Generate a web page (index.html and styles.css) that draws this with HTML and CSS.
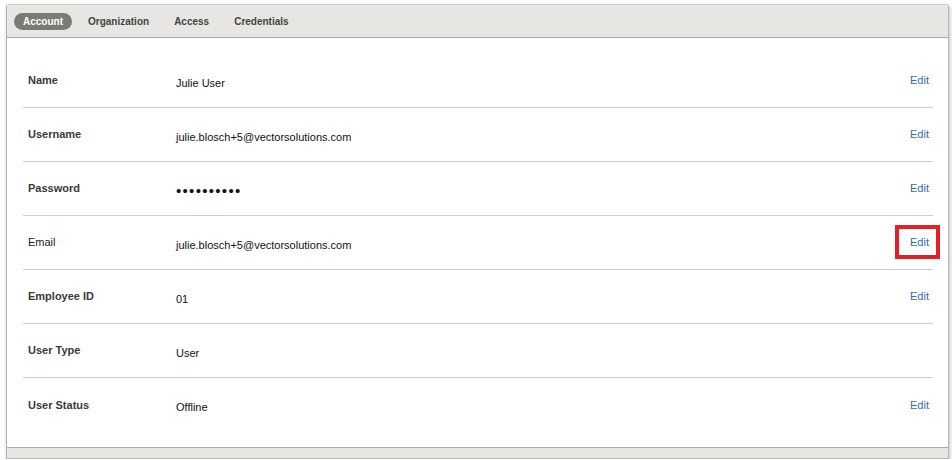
FILE: index.html
```html
<!DOCTYPE html>
<html lang="en">
<head>
    <meta charset="UTF-8">
    <title>User Profile</title>
    <link rel="stylesheet" href="styles.css">
</head>
<body>
    <div class="panel">
        <div class="tab-bar">
            <span class="tab active">Account</span>
            <span class="tab">Organization</span>
            <span class="tab">Access</span>
            <span class="tab">Credentials</span>
        </div>

        <div class="details">
            <div class="row">
                <div class="label">Name</div>
                <div class="value">Julie User</div>
                <a class="edit" href="#">Edit</a>
            </div>
            <div class="row">
                <div class="label">Username</div>
                <div class="value">julie.blosch+5@vectorsolutions.com</div>
                <a class="edit" href="#">Edit</a>
            </div>
            <div class="row">
                <div class="label">Password</div>
                <div class="value dots">&bull;&bull;&bull;&bull;&bull;&bull;&bull;&bull;&bull;&bull;</div>
                <a class="edit" href="#">Edit</a>
            </div>
            <div class="row">
                <div class="label plain">Email</div>
                <div class="value">julie.blosch+5@vectorsolutions.com</div>
                <a class="edit highlight" href="#">Edit</a>
            </div>
            <div class="row">
                <div class="label">Employee ID</div>
                <div class="value">01</div>
                <a class="edit" href="#">Edit</a>
            </div>
            <div class="row">
                <div class="label">User Type</div>
                <div class="value">User</div>
                <span></span>
            </div>
            <div class="row">
                <div class="label">User Status</div>
                <div class="value">Offline</div>
                <a class="edit" href="#">Edit</a>
            </div>
        </div>

        <div class="footer-bar"></div>
    </div>
</body>
</html>
```

FILE: styles.css
```css
body {
    margin: 0;
    font-family: "Liberation Sans", Arial, sans-serif;
    background: #fff;
    color: #222;
}
.panel {
    margin: 4px 0 0 6px;
    width: 941px;
    border: 1px solid #b4b4b0;
    border-top-color: #cfcfcb;
    border-radius: 3px 3px 0 0;
    box-shadow: 1px 2px 4px rgba(0, 0, 0, 0.25);
    background: #fff;
}
.tab-bar {
    height: 32px;
    background: #e6e6e2;
    border-bottom: 1px solid #aaaaa6;
    display: flex;
    align-items: center;
    padding-left: 7px;
}
.tab {
    font-size: 10px;
    font-weight: bold;
    color: #444;
    padding: 2px 8px;
    margin-right: 9px;
}
.tab.active {
    background: #7b7b76;
    color: #fff;
    border-radius: 9px;
    padding: 3px 9px;
    margin-right: 8px;
}
.details {
    padding: 16px 15px 15px 16px;
}
.row {
    display: grid;
    grid-template-columns: 148px 1fr auto;
    align-items: center;
    height: 53px;
    border-bottom: 1px solid #cfcfcf;
    padding: 0 4px 0 5px;
}
.row:last-child {
    border-bottom: none;
    height: 54px;
}
.label {
    font-size: 11px;
    font-weight: bold;
    color: #3a3a3a;
    margin-top: -1px;
}
.label.plain {
    font-weight: normal;
    color: #222;
}
.value {
    font-size: 11px;
    color: #111;
    margin-top: 4px;
}
.dots {
    font-size: 15px;
    letter-spacing: 1.3px;
    line-height: 1;
}
.edit {
    font-size: 11px;
    color: #3468b4;
    text-decoration: none;
    margin-top: -1px;
}
.edit.highlight {
    position: relative;
}
.edit.highlight::after {
    content: "";
    position: absolute;
    left: -15px;
    top: -11px;
    right: -11px;
    bottom: -11px;
    border: 4px solid #e3202a;
}
.footer-bar {
    height: 10px;
    background: #e6e6e2;
    border-top: 1px solid #aaaaa6;
}
```
